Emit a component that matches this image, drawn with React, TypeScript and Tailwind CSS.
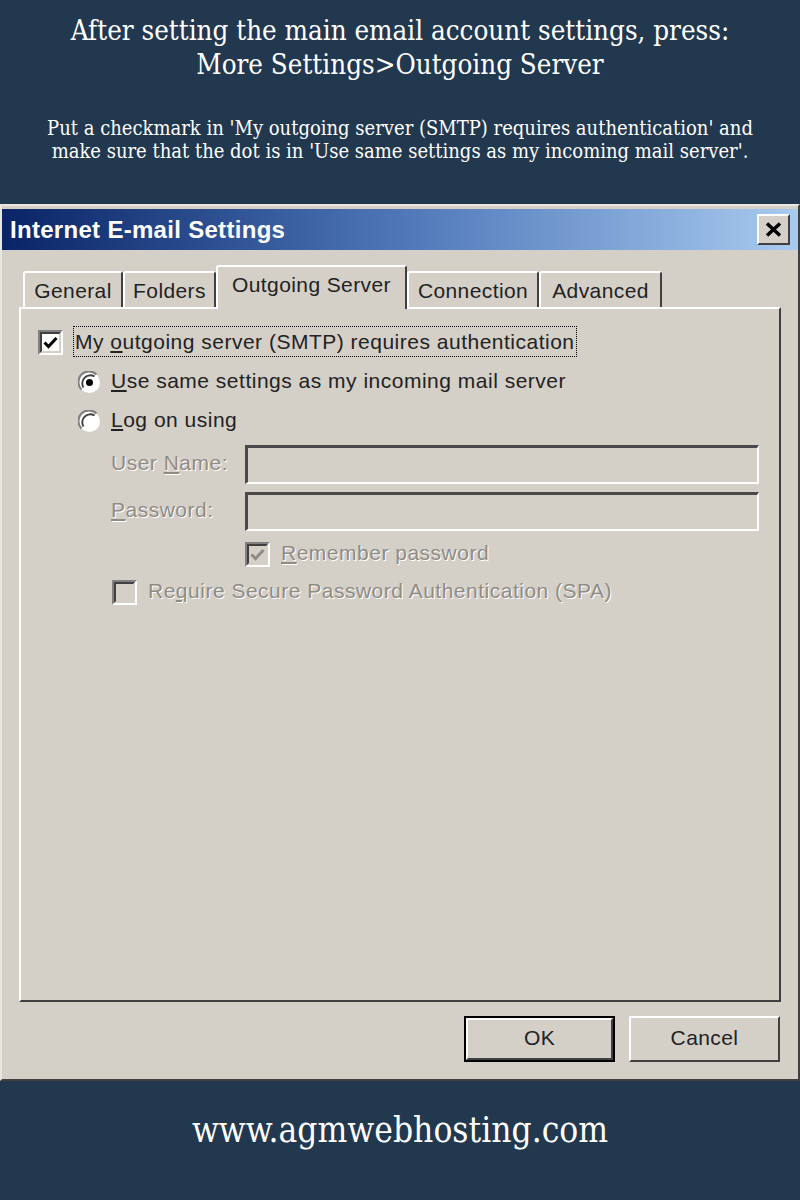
import React from 'react';

const ui = "font-['Liberation_Sans',Tahoma,Arial,sans-serif]";
const serif = "font-['DejaVu_Serif_Condensed','DejaVu_Serif',serif] font-stretch-condensed";
const dim = 'text-[#8f8b85] [text-shadow:1px_1px_0_#ffffff]';

const CheckBox = ({ checked, disabled }: { checked?: boolean; disabled?: boolean }) => (
  <div className="h-[25px] w-[25px] shrink-0 border-t-2 border-l-2 border-t-[#808080] border-l-[#808080] border-b-2 border-r-2 border-b-white border-r-white">
    <div
      className={`flex h-full w-full items-center justify-center border-t-2 border-l-2 border-t-[#404040] border-l-[#404040] border-b-2 border-r-2 border-b-[#d4d0c8] border-r-[#d4d0c8] ${
        disabled ? 'bg-[#d4d0c8]' : 'bg-white'
      }`}
    >
      {checked && (
        <svg width="15" height="13" viewBox="0 0 15 13">
          <path d="M1.5 6.5 L5.5 10.5 L13.5 2" fill="none" stroke={disabled ? '#8f8b85' : '#000'} strokeWidth="3" />
        </svg>
      )}
    </div>
  </div>
);

const Radio = ({ on }: { on?: boolean }) => (
  <svg width="23" height="23" viewBox="0 0 23 23" className="shrink-0">
    <circle cx="11.5" cy="11.5" r="10.5" fill="#ffffff" />
    <path d="M3.5 18.5 A10.5 10.5 0 0 1 18.5 3.5" fill="none" stroke="#808080" strokeWidth="2" />
    <path d="M5.5 16.5 A8 8 0 0 1 16.5 5.5" fill="none" stroke="#404040" strokeWidth="2" />
    {on && <circle cx="11.5" cy="11.5" r="3.5" fill="#000" />}
  </svg>
);

const Key = ({ children }: { children: React.ReactNode }) => <span className="underline underline-offset-2">{children}</span>;

const tabs = [
  { label: 'General', w: 'w-[100px]' },
  { label: 'Folders', w: 'w-[93px]' },
  { label: 'Outgoing Server', w: 'w-[191px]', active: true },
  { label: 'Connection', w: 'w-[132px]' },
  { label: 'Advanced', w: 'w-[123px]' },
];

const Field = () => (
  <div className="h-[39px] w-[514px] border-t-[3px] border-l-[3px] border-t-[#4a4a4a] border-l-[#4a4a4a] border-b-2 border-r-2 border-b-white border-r-white bg-[#d4d0c8]" />
);

export default function App() {
  return (
    <div className="min-h-[1200px] w-[800px] bg-[#22384f] text-white">
      <div className="pt-[13px] pb-[41px] text-center">
        <h1 className={`${serif} text-[27.5px] leading-[34px]`}>
          After setting the main email account settings, press:
          <br />
          More Settings&gt;Outgoing Server
        </h1>
        <p className={`${serif} mt-[36px] text-[20px] leading-[23px]`}>
          Put a checkmark in 'My outgoing server (SMTP) requires authentication' and
          <br />
          make sure that the dot is in 'Use same settings as my incoming mail server'.
        </p>
      </div>

      <div className={`${ui} h-[877px] border-2 border-t-[#e8e6e0] border-l-[#e8e6e0] border-b-[#404040] border-r-[#404040] bg-[#d4d0c8] text-black`}>
        <div className="mt-[3px] flex h-[41px] items-center justify-between bg-gradient-to-r from-[#0a2466] via-[#4f77b8] to-[#a9cbef] pl-[8px] pr-[8px]">
          <span className="text-[24px] font-bold tracking-[0.3px] text-white">Internet E-mail Settings</span>
          <div className="flex h-[31px] w-[33px] items-center justify-center border-2 border-t-white border-l-white border-b-[#404040] border-r-[#404040] bg-[#d4d0c8]">
            <svg width="17" height="15" viewBox="0 0 17 15">
              <path d="M2 1.5 L15 13.5 M15 1.5 L2 13.5" stroke="#000" strokeWidth="3.5" />
            </svg>
          </div>
        </div>

        <div className="mt-[15px] flex items-end pl-[21px] tracking-[0.4px]">
          {tabs.map((t) => (
            <div
              key={t.label}
              className={`${t.w} flex items-center justify-center border-l-2 border-t-2 border-r-2 border-l-white border-t-white border-r-[#404040] rounded-t-[3px] text-[21px] text-[#222] ${
                t.active ? 'relative z-10 -mb-[2px] h-[44px] pb-[6px] bg-[#d4d0c8]' : 'h-[36px] pt-[2px]'
              }`}
            >
              {t.label}
            </div>
          ))}
        </div>

        <div className="mx-[17px] h-[695px] border-2 border-t-white border-l-white border-b-[#404040] border-r-[#404040] pl-[17px] pt-[21px] text-[21px] tracking-[0.5px] text-[#222]">
          <div className="flex h-[25px] items-center gap-[10px]">
            <CheckBox checked />
            <span className="-mt-[3px] border border-dotted border-black px-[1px] leading-[29px]">
              My <Key>o</Key>utgoing server (SMTP) requires authentication
            </span>
          </div>

          <div className="mt-[16px] ml-[40px] flex h-[23px] items-center gap-[10px]">
            <Radio on />
            <span className="-mt-[4px]">
              <Key>U</Key>se same settings as my incoming mail server
            </span>
          </div>
          <div className="mt-[16px] ml-[40px] flex h-[23px] items-center gap-[10px]">
            <Radio />
            <span className="-mt-[4px]">
              <Key>L</Key>og on using
            </span>
          </div>

          <div className={`mt-[12px] ml-[73px] flex items-center ${dim}`}>
            <span className="-mt-[4px] w-[134px]">
              User <Key>N</Key>ame:
            </span>
            <Field />
          </div>
          <div className={`mt-[8px] ml-[73px] flex items-center ${dim}`}>
            <span className="-mt-[4px] w-[134px]">
              <Key>P</Key>assword:
            </span>
            <Field />
          </div>

          <div className={`mt-[11px] ml-[207px] flex h-[25px] items-center gap-[11px] ${dim}`}>
            <CheckBox checked disabled />
            <span className="-mt-[4px]">
              <Key>R</Key>emember password
            </span>
          </div>
          <div className={`mt-[13px] ml-[74px] flex h-[25px] items-center gap-[11px] ${dim}`}>
            <CheckBox disabled />
            <span className="-mt-[4px]">
              Re<Key>q</Key>uire Secure Password Authentication (SPA)
            </span>
          </div>
        </div>

        <div className="mt-[14px] flex justify-end gap-[14px] pr-[18px] text-[21px] tracking-[0.4px] text-[#222]">
          <div className="border-2 border-black">
            <div className="flex h-[42px] w-[147px] items-center justify-center border-2 border-t-white border-l-white border-b-[#404040] border-r-[#404040] pb-[3px]">
              OK
            </div>
          </div>
          <div className="flex h-[46px] w-[151px] items-center justify-center border-2 border-t-white border-l-white border-b-[#404040] border-r-[#404040] pb-[3px]">
            Cancel
          </div>
        </div>
      </div>

      <div className={`${serif} pt-[29px] text-center text-[35px] leading-[40px]`}>www.agmwebhosting.com</div>
    </div>
  );
}
